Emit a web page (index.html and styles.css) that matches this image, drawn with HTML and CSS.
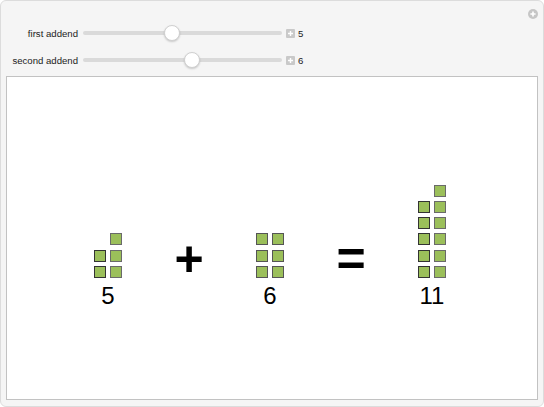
FILE: index.html
```
<!DOCTYPE html>
<html>
<head>
<meta charset="utf-8">
<link rel="stylesheet" href="styles.css">
</head>
<body>
<div class="frame">
  <div class="corner-btn"><svg width="10" height="10" viewBox="0 0 10 10"><circle cx="5" cy="5" r="5" fill="#c6c6c6"/><path d="M5 2.4v5.2M2.4 5h5.2" stroke="#fff" stroke-width="1.6"/></svg></div>
  <div class="controls">
    <div class="ctl-row">
      <span class="ctl-label">first addend</span>
      <div class="track"><span class="thumb t1"></span></div>
      <span class="pbox"><svg width="9" height="9" viewBox="0 0 9 9"><rect width="9" height="9" rx="1" fill="#c9c9c9"/><path d="M4.5 2v5M2 4.5h5" stroke="#fff" stroke-width="1.4"/></svg></span>
      <span class="ctl-val">5</span>
    </div>
    <div class="ctl-row">
      <span class="ctl-label">second addend</span>
      <div class="track"><span class="thumb t2"></span></div>
      <span class="pbox"><svg width="9" height="9" viewBox="0 0 9 9"><rect width="9" height="9" rx="1" fill="#c9c9c9"/><path d="M4.5 2v5M2 4.5h5" stroke="#fff" stroke-width="1.4"/></svg></span>
      <span class="ctl-val">6</span>
    </div>
  </div>
  <div class="panel">
    <div class="eq-row">
      <div class="cell">
        <div class="blocks">
          <i class="empty"></i><i class="sq r"></i>
          <i class="sq l"></i><i class="sq r"></i>
          <i class="sq l"></i><i class="sq r"></i>
        </div>
        <div class="num">5</div>
      </div>
      <div class="cell op"><span class="sym">+</span></div>
      <div class="cell">
        <div class="blocks">
          <i class="sq m"></i><i class="sq m"></i>
          <i class="sq m"></i><i class="sq m"></i>
          <i class="sq m"></i><i class="sq m"></i>
        </div>
        <div class="num">6</div>
      </div>
      <div class="cell op"><span class="sym">=</span></div>
      <div class="cell">
        <div class="blocks">
          <i class="empty"></i><i class="sq r"></i>
          <i class="sq l"></i><i class="sq r"></i>
          <i class="sq l"></i><i class="sq r"></i>
          <i class="sq l"></i><i class="sq r"></i>
          <i class="sq l"></i><i class="sq r"></i>
          <i class="sq l"></i><i class="sq r"></i>
        </div>
        <div class="num">11</div>
      </div>
    </div>
  </div>
</div>
</body>
</html>
```
FILE: styles.css
```
html, body {
  margin: 0;
  padding: 0;
  background: #ffffff;
}
.frame {
  position: relative;
  box-sizing: border-box;
  width: 544px;
  height: 407px;
  border: 1px solid #dcdcdc;
  border-radius: 6px;
  background: #f5f5f5;
  padding: 0 5px;
  font-family: "Liberation Sans", Arial, sans-serif;
}
.corner-btn {
  position: absolute;
  right: 5px;
  top: 8px;
  width: 10px;
  height: 10px;
  line-height: 0;
}
.controls {
  padding-top: 23px;
  display: flex;
  flex-direction: column;
  gap: 9px;
}
.ctl-row {
  display: flex;
  align-items: center;
  height: 18px;
}
.ctl-label {
  width: 72px;
  text-align: right;
  font-size: 9.6px;
  color: #222;
}
.track {
  position: relative;
  margin-left: 5px;
  width: 199px;
  height: 4px;
  border-radius: 2px;
  background: #dadada;
}
.thumb {
  position: absolute;
  top: -6px;
  width: 16px;
  height: 16px;
  border-radius: 50%;
  background: #fff;
  box-sizing: border-box;
  border: 1px solid #d0d0d0;
  box-shadow: 0 1px 2px rgba(0,0,0,0.18);
}
.t1 { left: 81px; }
.t2 { left: 101px; }
.pbox {
  margin-left: 4px;
  width: 9px;
  height: 9px;
  line-height: 0;
}
.ctl-val {
  margin-left: 3px;
  font-size: 9.6px;
  color: #222;
}
.panel {
  margin-top: 7px;
  box-sizing: border-box;
  height: 324px;
  background: #fff;
  border: 1px solid #c2c2c2;
  display: flex;
  justify-content: center;
  padding-right: 4px;
}
.eq-row {
  display: flex;
  align-items: flex-end;
  margin-top: 107px;
  height: 126px;
}
.cell {
  width: 81px;
  display: flex;
  flex-direction: column;
  align-items: center;
}
.blocks {
  display: grid;
  grid-template-columns: 12px 12px;
  column-gap: 4.7px;
  row-gap: 4.3px;
}
.blocks i {
  display: block;
  width: 12px;
  height: 12px;
  box-sizing: border-box;
}
.sq {
  background: #9bbf5a;
  border: 1px solid #333;
}
.sq.r { border-color: #6a6a6a; }
.sq.m { border-color: #555; }
.num {
  margin-top: 4px;
  font-size: 24px;
  line-height: 28px;
  color: #000;
}
.op {
  align-self: stretch;
  justify-content: flex-end;
}
.sym {
  font-size: 50px;
  font-weight: bold;
  line-height: 30px;
  height: 30px;
  margin-bottom: 36px;
  color: #000;
}
```
